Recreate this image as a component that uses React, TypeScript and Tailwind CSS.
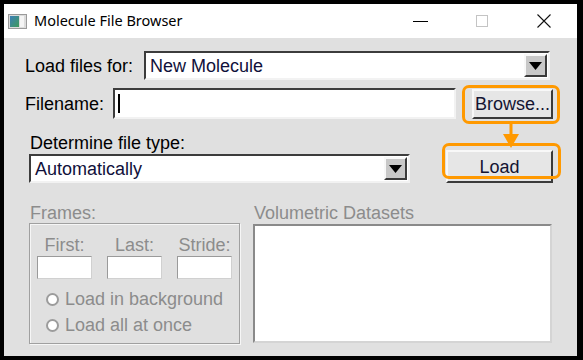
import React from 'react';

const font = { fontFamily: '"Liberation Sans", Arial, sans-serif' };

const sunken = 'border-2 border-t-[#3c3c3c] border-l-[#3c3c3c] border-b-[#f2f2f2] border-r-[#f2f2f2] bg-white';
const raised = 'border-2 border-t-[#f8f8f8] border-l-[#f8f8f8] border-b-[#3a3a3a] border-r-[#3a3a3a]';

const DropButton: React.FC = () => (
  <div className={`${raised} w-[23px] h-[23px] bg-[#c8c8c8] flex items-center justify-center shrink-0`}>
    <svg width="13" height="8" viewBox="0 0 13 8">
      <polygon points="0,0 13,0 6.5,8" fill="#000" />
    </svg>
  </div>
);

const Select: React.FC<{ value: string; width: string }> = ({ value, width }) => (
  <div className={`${sunken} ${width} h-[29px] flex items-center justify-between pl-[4px] pr-[1px]`}>
    <span className="text-[18px] leading-none text-[#10103a]">{value}</span>
    <DropButton />
  </div>
);

const SmallEntry: React.FC = () => (
  <div className="w-[55px] h-[23px] bg-white border border-t-[#9a9a9a] border-l-[#9a9a9a] border-b-[#d0d0d0] border-r-[#d0d0d0]" />
);

const Radio: React.FC<{ label: string }> = ({ label }) => (
  <div className="flex items-center gap-[6px] h-[26px]">
    <div className="w-[13px] h-[13px] rounded-full bg-white border-2 border-[#9c9c9c]" />
    <span className="text-[18px] leading-none text-[#8c8c8c]">{label}</span>
  </div>
);

export default function App() {
  return (
    <div className="w-[583px] h-[360px] bg-black pt-[4px] pl-[4px]" style={font}>
      <div className="relative w-[573px] h-[352px] flex flex-col bg-[#e0e0e0]">
        {/* Title bar */}
        <div className="h-[34px] bg-white flex items-center shrink-0">
          <svg className="ml-[4px]" width="19" height="15" viewBox="0 0 19 15">
            <defs>
              <linearGradient id="g" x1="0" y1="0" x2="1" y2="1">
                <stop offset="0" stopColor="#3c7fb8" />
                <stop offset="1" stopColor="#3e9a5a" />
              </linearGradient>
            </defs>
            <rect x="0.5" y="0.5" width="18" height="14" fill="#dcdcdc" stroke="#9a9a9a" />
            <rect x="2" y="2" width="9" height="11" fill="url(#g)" />
            <rect x="12" y="2" width="4" height="11" fill="#f4f4f4" />
          </svg>
          <span className="ml-[7px] text-[14.5px] text-black" style={{ fontFamily: '"Noto Sans", sans-serif' }}>
            Molecule File Browser
          </span>
          <div className="ml-auto flex items-center h-full">
            <div className="w-[62px] flex justify-center">
              <div className="w-[15px] h-[1px] bg-black" />
            </div>
            <div className="w-[62px] flex justify-center">
              <div className="w-[12px] h-[12px] border border-[#c4c4c4]" />
            </div>
            <div className="w-[62px] flex justify-center mr-[2px]">
              <svg width="14" height="14" viewBox="0 0 14 14">
                <path d="M0.5 0.5 L13.5 13.5 M13.5 0.5 L0.5 13.5" stroke="#111" strokeWidth="1.1" />
              </svg>
            </div>
          </div>
        </div>

        {/* Load files for */}
        <div className="flex items-center mt-[13px] ml-[21px] h-[29px]">
          <span className="text-[18px] leading-none text-black w-[119px]">Load files for:</span>
          <Select value="New Molecule" width="w-[406px]" />
        </div>

        {/* Filename */}
        <div className="flex items-center mt-[8px] ml-[21px] h-[31px]">
          <span className="text-[18px] leading-none text-black w-[88px]">Filename:</span>
          <div className={`${sunken} w-[343px] h-[31px] flex items-center pl-[3px]`}>
            <div className="w-[2px] h-[19px] bg-black" />
          </div>
          <div className="relative ml-[16px]">
            <div className={`${raised} w-[81px] h-[30px] bg-[#e6e6e6] flex items-center justify-center`}>
              <span className="text-[18px] leading-none text-[#141432]">Browse...</span>
            </div>
            <div className="absolute -left-[10px] -top-[4px] w-[98px] h-[39px] border-[3.5px] border-[#ff9900] rounded-[7px]" />
          </div>
        </div>

        {/* Determine file type + Load */}
        <div className="flex items-start mt-[14px] ml-[25px]">
          <div className="flex flex-col">
            <span className="text-[18px] leading-[21px] text-black ml-[1px]">Determine file type:</span>
            <Select value="Automatically" width="w-[381px]" />
          </div>
          <div className="relative ml-[36px] mt-[17px]">
            <div className={`${raised} w-[107px] h-[33px] bg-[#e6e6e6] flex items-center justify-center`}>
              <span className="text-[18px] leading-none text-[#141432]">Load</span>
            </div>
            <div className="absolute -left-[4px] -top-[7px] w-[119px] h-[36px] border-[3.5px] border-[#ff9900] rounded-[7px]" />
          </div>
        </div>

        {/* Arrow between Browse and Load */}
        <svg className="absolute left-[499px] top-[119px]" width="16" height="26" viewBox="0 0 16 26">
          <line x1="8" y1="0" x2="8" y2="13" stroke="#ff9900" strokeWidth="3" />
          <polygon points="0,11 16,11 8,25" fill="#ff9900" />
        </svg>

        {/* Frames + Volumetric */}
        <div className="flex items-start mt-[20px] ml-[25px]">
          <div className="flex flex-col">
            <span className="text-[18px] leading-[20px] text-[#8c8c8c] ml-[1px]">Frames:</span>
            <div className="w-[211px] h-[121px] border border-[#a0a0a0] shadow-[inset_1px_1px_0_#f6f6f6,1px_1px_0_#f6f6f6] px-[7px] pt-[11px]">
              <div className="flex gap-[15px]">
                {['First:', 'Last:', 'Stride:'].map((l) => (
                  <div key={l} className="flex flex-col items-center">
                    <span className="text-[18px] leading-[21px] text-[#8c8c8c]">{l}</span>
                    <SmallEntry />
                  </div>
                ))}
              </div>
              <div className="flex flex-col ml-[9px] mt-[7px]">
                <Radio label="Load in background" />
                <Radio label="Load all at once" />
              </div>
            </div>
          </div>
          <div className="flex flex-col ml-[13px]">
            <span className="text-[18px] leading-[21px] text-[#8c8c8c] ml-[1px]">Volumetric Datasets</span>
            <div className="w-[299px] h-[119px] bg-white border-2 border-t-[#8a8a8a] border-l-[#8a8a8a] border-b-[#d4d4d4] border-r-[#d4d4d4]" />
          </div>
        </div>
      </div>
    </div>
  );
}
